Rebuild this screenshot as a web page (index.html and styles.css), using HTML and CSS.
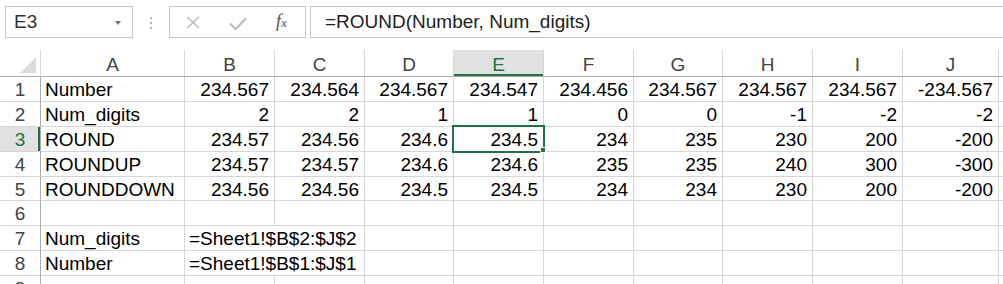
FILE: index.html
```html
<!DOCTYPE html>
<html>
  <head>
    <meta charset="utf-8">
    <title>ROUND</title>
    <link rel="stylesheet" href="styles.css">
  </head>
  <body>
    <div class="formula-bar">
      <div class="name-box">
        <span class="name">E3</span>
        <span class="drop"></span>
      </div>
      <div class="grip">
        <svg width="4" height="14" viewBox="0 0 4 14">
          <circle cx="2" cy="2" r="1.1" fill="#a6a6a6"/>
          <circle cx="2" cy="7" r="1.1" fill="#a6a6a6"/>
          <circle cx="2" cy="12" r="1.1" fill="#a6a6a6"/>
        </svg>
      </div>
      <div class="fx-buttons">
        <svg class="btn-cancel" width="14" height="13" viewBox="0 0 14 13">
          <path d="M1 1 L13 12 M13 1 L1 12" stroke="#bcbcbc" stroke-width="1.6" fill="none"/>
        </svg>
        <svg class="btn-enter" width="18" height="13" viewBox="0 0 18 13">
          <path d="M1 6.5 L6.5 12 L17 1.5" stroke="#bcbcbc" stroke-width="2.2" fill="none"/>
        </svg>
        <span class="fx">f<span>x</span></span>
      </div>
      <div class="formula">=ROUND(Number, Num_digits)</div>
    </div>

    <div class="sheet">
      <div class="cell corner"><span class="tri"></span></div>
      <div class="cell col-head">A</div>
      <div class="cell col-head">B</div>
      <div class="cell col-head">C</div>
      <div class="cell col-head">D</div>
      <div class="cell col-head selected">E</div>
      <div class="cell col-head">F</div>
      <div class="cell col-head">G</div>
      <div class="cell col-head">H</div>
      <div class="cell col-head">I</div>
      <div class="cell col-head">J</div>
      <div class="cell col-head"></div>

      <div class="cell row-head">1</div>
      <div class="cell">Number</div>
      <div class="cell num">234.567</div>
      <div class="cell num">234.564</div>
      <div class="cell num">234.567</div>
      <div class="cell num">234.547</div>
      <div class="cell num">234.456</div>
      <div class="cell num">234.567</div>
      <div class="cell num">234.567</div>
      <div class="cell num">234.567</div>
      <div class="cell num">-234.567</div>
      <div class="cell"></div>

      <div class="cell row-head">2</div>
      <div class="cell">Num_digits</div>
      <div class="cell num">2</div>
      <div class="cell num">2</div>
      <div class="cell num">1</div>
      <div class="cell num">1</div>
      <div class="cell num">0</div>
      <div class="cell num">0</div>
      <div class="cell num">-1</div>
      <div class="cell num">-2</div>
      <div class="cell num">-2</div>
      <div class="cell"></div>

      <div class="cell row-head selected">3</div>
      <div class="cell">ROUND</div>
      <div class="cell num">234.57</div>
      <div class="cell num">234.56</div>
      <div class="cell num">234.6</div>
      <div class="cell num active">234.5<div class="selection"></div><div class="handle"></div></div>
      <div class="cell num">234</div>
      <div class="cell num">235</div>
      <div class="cell num">230</div>
      <div class="cell num">200</div>
      <div class="cell num">-200</div>
      <div class="cell"></div>

      <div class="cell row-head">4</div>
      <div class="cell">ROUNDUP</div>
      <div class="cell num">234.57</div>
      <div class="cell num">234.57</div>
      <div class="cell num">234.6</div>
      <div class="cell num">234.6</div>
      <div class="cell num">235</div>
      <div class="cell num">235</div>
      <div class="cell num">240</div>
      <div class="cell num">300</div>
      <div class="cell num">-300</div>
      <div class="cell"></div>

      <div class="cell row-head">5</div>
      <div class="cell">ROUNDDOWN</div>
      <div class="cell num">234.56</div>
      <div class="cell num">234.56</div>
      <div class="cell num">234.5</div>
      <div class="cell num">234.5</div>
      <div class="cell num">234</div>
      <div class="cell num">234</div>
      <div class="cell num">230</div>
      <div class="cell num">200</div>
      <div class="cell num">-200</div>
      <div class="cell"></div>

      <div class="cell row-head">6</div>
      <div class="cell"></div>
      <div class="cell"></div>
      <div class="cell"></div>
      <div class="cell"></div>
      <div class="cell"></div>
      <div class="cell"></div>
      <div class="cell"></div>
      <div class="cell"></div>
      <div class="cell"></div>
      <div class="cell"></div>
      <div class="cell"></div>

      <div class="cell row-head">7</div>
      <div class="cell">Num_digits</div>
      <div class="cell span2">=Sheet1!$B$2:$J$2</div>
      <div class="cell"></div>
      <div class="cell"></div>
      <div class="cell"></div>
      <div class="cell"></div>
      <div class="cell"></div>
      <div class="cell"></div>
      <div class="cell"></div>
      <div class="cell"></div>

      <div class="cell row-head">8</div>
      <div class="cell">Number</div>
      <div class="cell span2">=Sheet1!$B$1:$J$1</div>
      <div class="cell"></div>
      <div class="cell"></div>
      <div class="cell"></div>
      <div class="cell"></div>
      <div class="cell"></div>
      <div class="cell"></div>
      <div class="cell"></div>
      <div class="cell"></div>

      <div class="cell row-head">9</div>
      <div class="cell"></div>
      <div class="cell"></div>
      <div class="cell"></div>
      <div class="cell"></div>
      <div class="cell"></div>
      <div class="cell"></div>
      <div class="cell"></div>
      <div class="cell"></div>
      <div class="cell"></div>
      <div class="cell"></div>
      <div class="cell"></div>
    </div>
  </body>
</html>
```

FILE: styles.css
```css
body, html {
  margin: 0px;
  padding: 0px;
  background: #fff;
  overflow: hidden;
  font-family: "Liberation Sans", Arial, sans-serif;
}
.formula-bar {
  display: flex;
  height: 32px;
  padding: 6px 0 0 5px;
  font-size: 19px;
}
.name-box {
  width: 128px;
  box-sizing: border-box;
  border: 1px solid #c6c6c6;
  display: flex;
  align-items: center;
  padding-left: 8px;
  color: #333;
}
.name-box .name {
  line-height: 30px;
}
.drop {
  margin-left: auto;
  margin-right: 11px;
  margin-top: 1px;
  width: 0;
  height: 0;
  border-left: 3.5px solid transparent;
  border-right: 3.5px solid transparent;
  border-top: 4px solid #707070;
}
.grip {
  width: 36px;
  display: flex;
  justify-content: center;
  align-items: flex-start;
  padding-top: 10px;
  box-sizing: border-box;
}
.fx-buttons {
  width: 137px;
  box-sizing: border-box;
  border: 1px solid #c6c6c6;
  display: flex;
  align-items: center;
  padding-left: 16px;
}
.btn-cancel {
  margin-top: 1px;
}
.btn-enter {
  margin-left: 29px;
  margin-top: 3px;
}
.fx {
  margin-left: 29px;
  font-family: "Liberation Serif", "Times New Roman", serif;
  font-style: italic;
  font-size: 18px;
  color: #505050;
  margin-top: -2px;
}
.fx span {
  font-size: 13px;
}
.formula {
  flex: 1;
  margin-left: 4px;
  border: 1px solid #c6c6c6;
  border-right: none;
  padding-left: 14px;
  line-height: 30px;
  color: #222;
  white-space: nowrap;
}
.sheet {
  display: grid;
  grid-template-columns: 41px 144px 90px 90px 89px 90px 90px 89px 90px 90px 96px 1fr;
  grid-template-rows: 27px 25px 25px 25px 25px 24px 25px 25px 25px 25px;
  margin-top: 12px;
  font-size: 19px;
  color: #000;
}
.cell {
  border-right: 1px solid #d6d6d6;
  border-bottom: 1px solid #d6d6d6;
  padding: 2px 4px 0;
  line-height: 22px;
  white-space: nowrap;
  min-width: 0;
}
.num {
  text-align: right;
  padding-right: 5px;
}
.span2 {
  grid-column: span 2;
}
.col-head {
  text-align: center;
  color: #444;
  padding-top: 4px;
  border-bottom-color: #ababab;
}
.row-head {
  text-align: center;
  color: #444;
  padding-left: 0;
  padding-right: 0;
  border-right-color: #ababab;
}
.corner {
  display: flex;
  justify-content: flex-end;
  align-items: flex-end;
  padding: 0 4px 3px 0;
  border-right-color: #d6d6d6;
  border-bottom-color: #ababab;
}
.tri {
  width: 0;
  height: 0;
  border-left: 16px solid transparent;
  border-bottom: 16px solid #dcdcdc;
}
.col-head.selected {
  background: #e1e1e1;
  color: #217346;
  box-shadow: inset 0 -2px 0 #217346;
}
.row-head.selected {
  background: #e1e1e1;
  color: #217346;
  box-shadow: inset -2px 0 0 #217346;
}
.active {
  position: relative;
}
.selection {
  position: absolute;
  top: -2px;
  left: -2px;
  right: -2px;
  bottom: -2px;
  border: 2px solid #217346;
}
.handle {
  position: absolute;
  right: -3px;
  bottom: -2px;
  width: 6px;
  height: 6px;
  box-sizing: border-box;
  background: #217346;
  border: 1px solid #fff;
}
```
